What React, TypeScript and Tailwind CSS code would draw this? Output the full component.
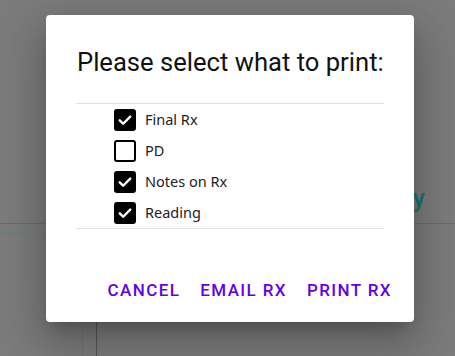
import React, { useState } from "react";

type Item = { id: string; label: string; checked: boolean };

const initial: Item[] = [
  { id: "final", label: "Final Rx", checked: true },
  { id: "pd", label: "PD", checked: false },
  { id: "notes", label: "Notes on Rx", checked: true },
  { id: "reading", label: "Reading", checked: true },
];

function Box({ checked }: { checked: boolean }) {
  if (!checked) {
    return <span className="block w-[22px] h-[22px] rounded-[3px] border-2 border-black bg-white" />;
  }
  return (
    <span className="flex items-center justify-center w-[22px] h-[22px] rounded-[3px] bg-black">
      <svg viewBox="0 0 24 24" className="w-[18px] h-[18px]" fill="none" stroke="white" strokeWidth={3.2} strokeLinecap="round" strokeLinejoin="round">
        <path d="M5 12.5l4.5 4.5L19 7.5" />
      </svg>
    </span>
  );
}

export default function App() {
  const [items, setItems] = useState(initial);

  function toggle(id: string) {
    setItems((prev) => prev.map((i) => (i.id === id ? { ...i, checked: !i.checked } : i)));
  }

  return (
    <div className="relative w-[455px] h-[356px] overflow-hidden bg-[#7b7b7b]" style={{ fontFamily: "Roboto, sans-serif" }}>
      {/* dimmed page behind the dialog */}
      <div className="flex flex-col h-full">
        <div className="h-[224px] flex justify-end items-end border-b border-[#6a6a6a] pr-[30px] pb-[12px]">
          <span className="text-[25px] font-medium text-[#167574] leading-none">y</span>
        </div>
        <div className="flex flex-1">
          <div className="w-[83px] border-r border-[#6d7777] flex flex-col">
            <div className="mt-[7px] h-[3px] bg-[#6f7e7d]" />
          </div>
          <div className="w-[14px] border-r border-[#555]" />
        </div>
      </div>

      {/* dialog */}
      <div className="absolute left-[46px] top-[15px] w-[368px] h-[307px] bg-white rounded-[4px] flex flex-col shadow-[0_11px_15px_-7px_rgba(0,0,0,0.2),0_24px_38px_3px_rgba(0,0,0,0.14),0_9px_46px_8px_rgba(0,0,0,0.12)]">
        <h2 className="pt-[31px] pl-[31px] text-[25.6px] leading-[32px] text-[#111]">
          Please select what to print:
        </h2>
        <div className="mx-[30px] mt-[25px] border-t border-b border-[#e0e0e0]">
          {items.map((i) => (
            <label
              key={i.id}
              onClick={() => toggle(i.id)}
              className="flex items-center h-[31px] pl-[38px] gap-[9px] cursor-pointer"
            >
              <Box checked={i.checked} />
              <span className="text-[14.5px] text-[#222]" style={{ fontFamily: '"Noto Sans", sans-serif' }}>
                {i.label}
              </span>
            </label>
          ))}
        </div>
        <div className="mt-auto flex justify-end gap-[4px] pr-[14px] pb-[13px]">
          {["CANCEL", "EMAIL RX", "PRINT RX"].map((b) => (
            <button key={b} className="h-[36px] px-2 text-[17px] font-medium tracking-[1.4px] text-[#6200ee] rounded">
              {b}
            </button>
          ))}
        </div>
      </div>
    </div>
  );
}
